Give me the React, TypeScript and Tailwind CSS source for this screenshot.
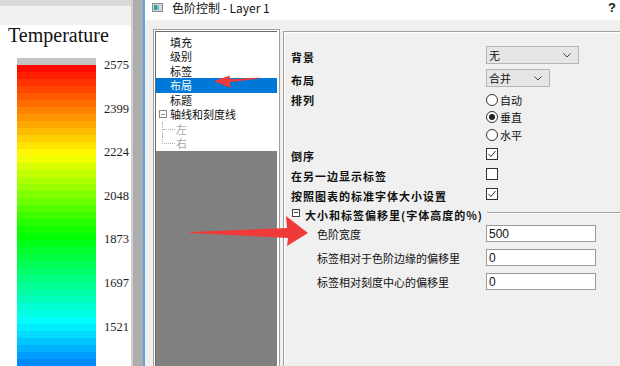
import React from 'react';

const cjk = "font-['Noto_Sans_CJK_SC','Noto_Sans',sans-serif]";

// colour bar stops (px from top of the coloured part)
const stops: [number, number[]][] = [
  [0, [255, 0, 0]],
  [90, [255, 255, 0]],
  [170, [0, 255, 0]],
  [257, [0, 255, 255]],
  [345, [0, 0, 255]],
];

const colorAt = (y: number) => {
  for (let i = 0; i < stops.length - 1; i++) {
    const [y0, c0] = stops[i];
    const [y1, c1] = stops[i + 1];
    if (y <= y1) {
      const t = Math.max(0, (y - y0) / (y1 - y0));
      const c = c0.map((v, k) => Math.round(v + (c1[k] - v) * t));
      return `rgb(${c[0]},${c[1]},${c[2]})`;
    }
  }
  return 'rgb(0,0,255)';
};

const bands = Array.from({ length: 44 }, (_, i) => colorAt(i * 7 + 3.5));
const ticks = ['2575', '2399', '2224', '2048', '1873', '1697', '1521', '1346'];

const Chevron = () => (
  <svg width="8" height="5" viewBox="0 0 8 5">
    <polyline points="0.5,0.5 4,4 7.5,0.5" fill="none" stroke="#444" strokeWidth="1" />
  </svg>
);

const Radio = ({ on, label }: { on?: boolean; label: string }) => (
  <div className="h-[17.5px] flex items-center">
    <span className="w-[12px] h-[12px] rounded-full border border-[#333] bg-white flex items-center justify-center">
      {on && <span className="w-[6px] h-[6px] rounded-full bg-[#222]" />}
    </span>
    <span className="ml-[2px] text-[11px] leading-[14px]">{label}</span>
  </div>
);

const Check = ({ on }: { on?: boolean }) => (
  <span className="w-[12px] h-[12px] border border-[#333] bg-white flex items-center justify-center">
    {on && (
      <svg width="10" height="10" viewBox="0 0 10 10">
        <polyline points="1.5,5 4,7.5 8.5,2" fill="none" stroke="#333" strokeWidth="1" />
      </svg>
    )}
  </span>
);

const MinusBox = ({ color }: { color: string }) => (
  <span className={`w-[8px] h-[8px] border ${color} flex items-center justify-center bg-white`}>
    <span className={`w-[4px] h-px ${color === 'border-[#444]' ? 'bg-[#444]' : 'bg-[#888]'}`} />
  </span>
);

const BoldLabel = ({ children }: { children: React.ReactNode }) => (
  <span className="text-[11px] font-bold tracking-[1px] leading-[14px] text-[#111]">{children}</span>
);

const TextInput = ({ value }: { value: string }) => (
  <div className="w-[110px] h-[17px] border border-[#9a9a9a] bg-white flex items-center pl-[2px] font-['Liberation_Sans',sans-serif] text-[12px] text-[#111]">
    {value}
  </div>
);

const treeItems = ['填充', '级别', '标签', '布局', '标题'];

export default function App() {
  return (
    <div className={`relative w-[620px] h-[366px] overflow-hidden flex bg-[#f0f0f0] ${cjk}`}>
      {/* graph window with the colour scale */}
      <div className="w-[131px] h-full flex flex-col overflow-hidden">
        <div className="h-[25px] shrink-0 flex flex-col">
          <div className="h-[6px] bg-[#d9d9dc]" />
          <div className="flex-1 bg-[#f0f0f0]" />
        </div>
        <div className="flex-1 shrink-0 bg-white">
          <div className="pl-[8px] h-[20px] leading-[20px] text-[20px] font-['Liberation_Serif',serif] text-[#111]">
            Temperature
          </div>
          <div className="mt-[13px] pl-[17px] flex">
            <div className="w-[79px] flex flex-col">
              <div className="h-[7px] bg-[#c3c3c3]" />
              {bands.map((c, i) => (
                <div key={i} className="h-[7px]" style={{ background: c }} />
              ))}
            </div>
            <div className="pl-[8px] flex flex-col font-['Liberation_Serif',serif] text-[12.5px] text-[#222]">
              {ticks.map(t => (
                <div key={t} className="h-[43.6px] leading-[14px]">{t}</div>
              ))}
            </div>
          </div>
        </div>
      </div>
      <div className="w-[2px] h-full bg-[#cfcfcf]" />
      <div className="w-[10px] h-full bg-[#adadad]" />
      <div className="w-[2px] h-full bg-[#5aa6e6]" />

      {/* dialog */}
      <div className="flex-1 flex flex-col">
        <div className="h-[20px] bg-white">
          <div className="h-[15px] flex items-center pl-[7px] pr-[4px]">
            <div className="w-[11px] h-[9px] border border-[#8a8a8a] bg-[#d8d8d8] flex p-px">
              <div className="w-[3px] h-full bg-[#2fa38a]" />
              <div className="w-[2px] h-full bg-[#6fc3e0]" />
            </div>
            <span className="ml-[9px] text-[12px] leading-[15px] text-[#111]">色阶控制 - Layer 1</span>
            <span className="ml-auto text-[13px] leading-[15px] font-bold font-['Liberation_Sans',sans-serif] text-[#222]">?</span>
          </div>
        </div>

        <div className="flex-1 flex pt-[9px] bg-[#f0f0f0]">
          {/* tree */}
          <div className="ml-[8px] w-[126px] border-l border-t border-[#a0a0a0] pl-px pt-px pr-[2px] bg-white flex">
            <div className="flex-1 border-l border-t border-[#6d6d6d] flex flex-col">
              <div className="pt-[2.5px] bg-white text-[11px] text-[#111]">
                {treeItems.map(t => (
                  <div
                    key={t}
                    className={`h-[14.5px] leading-[14.5px] pl-[14px] ${t === '布局' ? 'bg-[#0078d7] text-white' : ''}`}
                  >
                    {t}
                  </div>
                ))}
                <div className="h-[14.5px] flex items-center pl-[3px]">
                  <MinusBox color="border-[#888]" />
                  <span className="ml-[3px] leading-[14.5px]">轴线和刻度线</span>
                </div>
                <div className="h-[14.5px] flex items-center pl-[6px] text-[#a8a8a8]">
                  <span className="w-[13px] h-full relative border-l border-dotted border-[#b0b0b0]">
                    <span className="absolute left-0 top-[7px] w-[12px] border-t border-dotted border-[#b0b0b0]" />
                  </span>
                  <span className="ml-[1px] leading-[14.5px]">左</span>
                </div>
                <div className="h-[14.5px] flex items-center pl-[6px] text-[#a8a8a8]">
                  <span className="w-[13px] h-[8px] self-start border-l border-b border-dotted border-[#b0b0b0]" />
                  <span className="ml-[1px] leading-[14.5px]">右</span>
                </div>
              </div>
              <div className="flex-1 bg-[#808080]" />
            </div>
          </div>

          {/* splitter */}
          <div className="w-[4px] border-l border-[#a0a0a0] bg-[#f0f0f0]" />

          {/* property panel */}
          <div className="flex-1 mt-[2px] border-l border-t border-[#a0a0a0] shadow-[inset_1px_1px_0_#ffffff] pt-[14px] pl-[7px] text-[#111]">
            <div className="h-[18px] flex items-center">
              <div className="w-[195px]"><BoldLabel>背景</BoldLabel></div>
              <div className="w-[93px] h-[18px] border border-[#b5b5b5] bg-[#e6e6e6] flex items-center justify-between pl-[2px] pr-[7px] text-[11px]">
                <span>无</span>
                <Chevron />
              </div>
            </div>
            <div className="mt-[5px] h-[18px] flex items-center">
              <div className="w-[195px]"><BoldLabel>布局</BoldLabel></div>
              <div className="w-[64px] h-[18px] border border-[#b5b5b5] bg-[#e6e6e6] flex items-center justify-between pl-[2px] pr-[7px] text-[11px]">
                <span>合并</span>
                <Chevron />
              </div>
            </div>
            <div className="mt-[4px] flex">
              <div className="w-[195px] h-[17.5px] flex items-center"><BoldLabel>排列</BoldLabel></div>
              <div className="flex flex-col">
                <Radio label="自动" />
                <Radio label="垂直" on />
                <Radio label="水平" />
              </div>
            </div>
            <div className="h-[20px] flex items-center">
              <div className="w-[195px]"><BoldLabel>倒序</BoldLabel></div>
              <Check on />
            </div>
            <div className="h-[20px] flex items-center">
              <div className="w-[195px]"><BoldLabel>在另一边显示标签</BoldLabel></div>
              <Check />
            </div>
            <div className="h-[20px] flex items-center">
              <div className="w-[195px]"><BoldLabel>按照图表的标准字体大小设置</BoldLabel></div>
              <Check on />
            </div>
            <div className="h-[18px] flex items-center">
              <span className="ml-px"><MinusBox color="border-[#444]" /></span>
              <span className="ml-[5px]"><BoldLabel>大小和标签偏移里(字体高度的%)</BoldLabel></span>
              <div className="flex-1 ml-[4px] h-[2px] border-t border-[#a0a0a0] border-b border-b-white" />
            </div>
            <div className="h-[24px] flex items-center">
              <div className="w-[195px] pl-[26px] text-[11px] leading-[14px]">色阶宽度</div>
              <TextInput value="500" />
            </div>
            <div className="h-[24px] flex items-center">
              <div className="w-[195px] pl-[26px] text-[11px] leading-[14px]">标签相对于色阶边缘的偏移里</div>
              <TextInput value="0" />
            </div>
            <div className="h-[24px] flex items-center">
              <div className="w-[195px] pl-[26px] text-[11px] leading-[14px]">标签相对刻度中心的偏移里</div>
              <TextInput value="0" />
            </div>
          </div>
        </div>
      </div>

      {/* red annotation arrows */}
      <svg className="absolute left-0 top-0 pointer-events-none" width="620" height="366" viewBox="0 0 620 366">
        <polygon
          points="214,81 230,75.5 229.5,79.3 259,77.6 259,78.6 229.5,82.2 231,88"
          fill="#f03a3a"
        />
        <polygon
          points="190,232 287,228 286,216 308,233 287,246 288,238 190,233"
          fill="#f03a3a"
        />
      </svg>
    </div>
  );
}
